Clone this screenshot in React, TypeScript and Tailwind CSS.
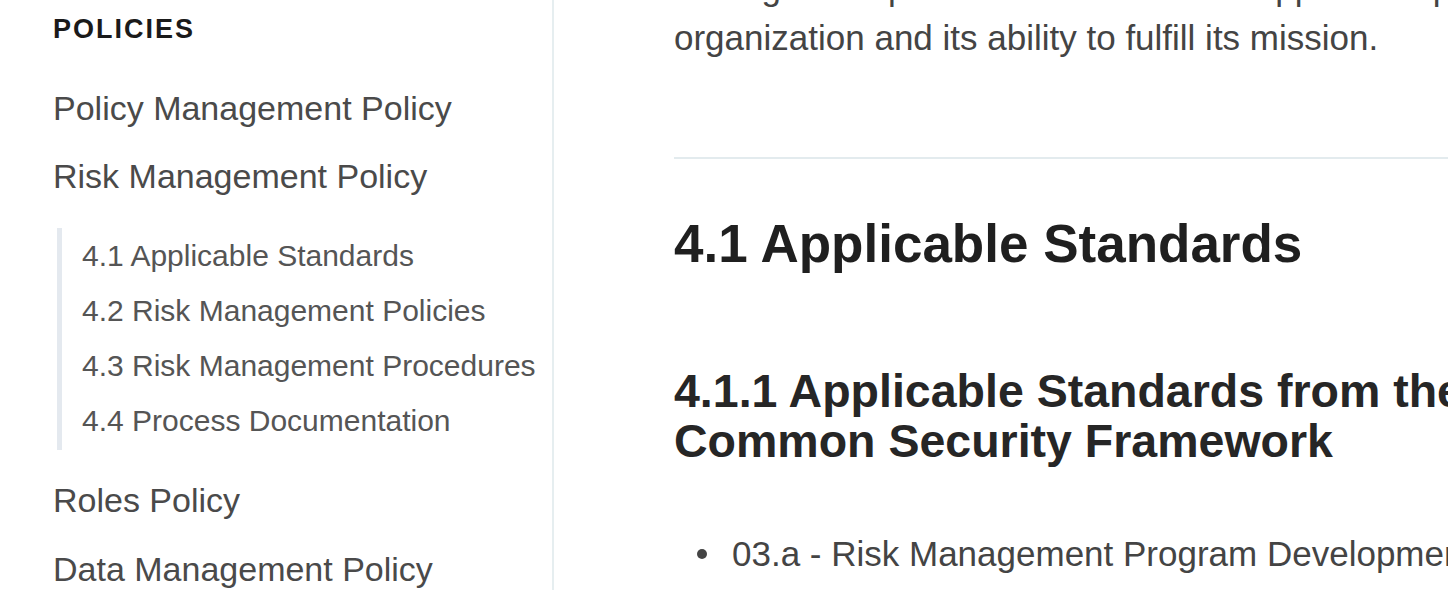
import React from "react";

const policies = ["Policy Management Policy", "Risk Management Policy"];
const sections = [
    "4.1 Applicable Standards",
    "4.2 Risk Management Policies",
    "4.3 Risk Management Procedures",
    "4.4 Process Documentation",
];
const morePolicies = ["Roles Policy", "Data Management Policy"];
const standards = ["03.a - Risk Management Program Development", "03.b - Performing Risk Assessments"];

function Sidebar() {
    return (
        <aside className="w-[554px] shrink-0 border-r-2 border-[#e6eef0] pl-[53px] pt-[11px]">
            <h4 className="text-[27px] leading-[36px] font-bold tracking-[2px] text-[#1a1a1a]">
                POLICIES
            </h4>
            <ul className="mt-[27px]">
                {policies.map((p) => (
                    <li key={p} className="text-[34px] leading-[68px] text-[#4a4a4a]">
                        {p}
                    </li>
                ))}
            </ul>
            <ul className="mt-[18px] ml-[4px] border-l-[5px] border-[#e4e9ef] pl-[20px] pb-[2px]">
                {sections.map((s) => (
                    <li key={s} className="text-[30px] leading-[55px] text-[#555555]">
                        {s}
                    </li>
                ))}
            </ul>
            <ul className="mt-[16px]">
                {morePolicies.map((p) => (
                    <li key={p} className="text-[34px] leading-[69px] text-[#4a4a4a]">
                        {p}
                    </li>
                ))}
            </ul>
        </aside>
    );
}

function Content() {
    return (
        <main className="w-[960px] shrink-0 pl-[120px] box-content">
            <p className="mt-[-37px] text-[35px] leading-[50px] text-[#444444]">
                management process is intended to support and protect the organization and its
                ability to fulfill its mission.
            </p>
            <hr className="mt-[94px] border-0 border-t-2 border-[#e3ebee]" />
            <h2 className="mt-[53px] text-[53px] leading-[64px] font-bold text-[#1f1f1f]">
                4.1 Applicable Standards
            </h2>
            <h3 className="mt-[90px] text-[46.5px] leading-[50px] font-bold text-[#262626]">
                4.1.1 Applicable Standards from the Common Security Framework
            </h3>
            <ul className="mt-[63px] pl-[23px] text-[35px] leading-[50px] text-[#444444]">
                {standards.map((s) => (
                    <li key={s} className="flex items-center whitespace-nowrap">
                        <span className="h-[10px] w-[10px] shrink-0 rounded-full bg-[#444444]" />
                        <span className="ml-[25px]">{s}</span>
                    </li>
                ))}
            </ul>
        </main>
    );
}

export default function App() {
    return (
        <div className="h-[590px] w-[1448px] overflow-hidden bg-white font-[family-name:'Liberation_Sans',Arial,sans-serif]">
            <div className="flex">
                <Sidebar />
                <Content />
            </div>
        </div>
    );
}
